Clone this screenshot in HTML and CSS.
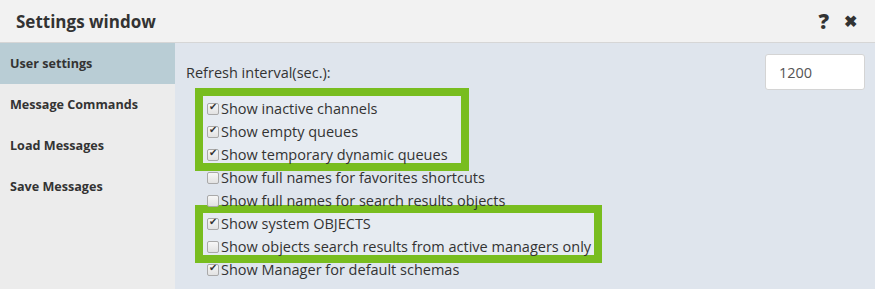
FILE: index.html
```html
<!DOCTYPE html>
<html lang="en">
<head>
    <meta charset="UTF-8">
    <title>Settings window</title>
    <link rel="stylesheet" href="styles.css">
</head>
<body>
    <div class="window">
        <!-- Title bar -->
        <div class="title-bar">
            <span class="title">Settings window</span>
            <div class="title-actions">
                <span class="title-btn">?</span>
                <span class="title-btn close">&#x2716;</span>
            </div>
        </div>

        <div class="window-body">
            <ul class="side-menu">
                <li class="side-item active">User settings</li>
                <li class="side-item">Message Commands</li>
                <li class="side-item">Load Messages</li>
                <li class="side-item">Save Messages</li>
            </ul>

            <div class="settings-pane">
                <div class="refresh-row">
                    <label for="refresh">Refresh interval(sec.):</label>
                    <input type="text" id="refresh" class="refresh-input" value="1200">
                </div>

                <div class="option-list">
                    <label class="option"><input type="checkbox" checked>Show inactive channels</label>
                    <label class="option"><input type="checkbox" checked>Show empty queues</label>
                    <label class="option"><input type="checkbox" checked>Show temporary dynamic queues</label>
                    <label class="option"><input type="checkbox">Show full names for favorites shortcuts</label>
                    <label class="option"><input type="checkbox">Show full names for search results objects</label>
                    <label class="option"><input type="checkbox" checked>Show system OBJECTS</label>
                    <label class="option"><input type="checkbox">Show objects search results from active managers only</label>
                    <label class="option"><input type="checkbox" checked>Show Manager for default schemas</label>
                </div>

                <!-- Highlight frames around groups of options -->
                <div class="highlight highlight-top"></div>
                <div class="highlight highlight-bottom"></div>
            </div>
        </div>
    </div>
</body>
</html>
```

FILE: styles.css
```css
html, body {
    margin: 0;
    height: 100%;
    overflow: hidden;
}

body {
    font-family: "Open Sans", "Noto Sans", sans-serif;
    color: #333;
    background-color: #dfe5ed;
}

.window {
    display: flex;
    flex-direction: column;
    height: 100%;
}

/* Title bar */
.title-bar {
    display: flex;
    align-items: center;
    justify-content: space-between;
    height: 42px;
    padding: 0 18px 0 16px;
    background-color: #f2f2f2;
    border-bottom: 1px solid #d6d6d6;
    flex-shrink: 0;
}

.title {
    font-size: 17px;
    font-weight: 700;
    color: #333;
}

.title-actions {
    display: flex;
    gap: 15px;
    align-items: center;
}

.title-btn {
    font-size: 21px;
    font-weight: 800;
    color: #333;
}

.title-btn.close {
    font-size: 16px;
}

.window-body {
    display: flex;
    flex: 1;
}

/* Left menu */
.side-menu {
    list-style: none;
    margin: 0;
    padding: 0;
    width: 175px;
    background-color: #ececec;
    flex-shrink: 0;
}

.side-item {
    height: 41px;
    line-height: 41px;
    padding-left: 10px;
    font-size: 12.6px;
    font-weight: 700;
    color: #333;
}

.side-item.active {
    background-color: #b9cdd5;
}

/* Settings */
.settings-pane {
    position: relative;
    flex: 1;
    padding: 11px 10px 0 11px;
}

.refresh-row {
    display: flex;
    align-items: center;
    justify-content: space-between;
    font-size: 14.5px;
}

.refresh-input {
    width: 100px;
    height: 36px;
    box-sizing: border-box;
    padding: 0 13px;
    border: 1px solid #d4d4d4;
    border-radius: 3px;
    background-color: #fff;
    font-family: inherit;
    font-size: 14.5px;
    color: #555;
}

.option-list {
    position: relative;
    z-index: 1;
    display: flex;
    flex-direction: column;
    padding: 7px 0 0 21px;
}

.option {
    display: flex;
    align-items: center;
    height: 23px;
    font-size: 14.5px;
    color: #333;
}

/* Small grey checkbox */
.option input {
    appearance: none;
    position: relative;
    width: 12px;
    height: 12px;
    margin: 0 2px 0 0;
    border: 1px solid #a9a9a9;
    border-radius: 2px;
    background: linear-gradient(#f7f7f7, #e2e2e2);
    flex-shrink: 0;
}

.option input:checked::after {
    content: "\2714";
    position: absolute;
    left: 1px;
    top: -3px;
    font-size: 10px;
    color: #333;
}

.highlight {
    position: absolute;
    left: 20px;
    border: 8px solid #78bd1f;
    background-color: #e6ebf1;
}

.highlight-top {
    top: 45px;
    width: 258px;
    height: 67px;
}

.highlight-bottom {
    top: 162px;
    width: 391px;
    height: 42px;
}
```
